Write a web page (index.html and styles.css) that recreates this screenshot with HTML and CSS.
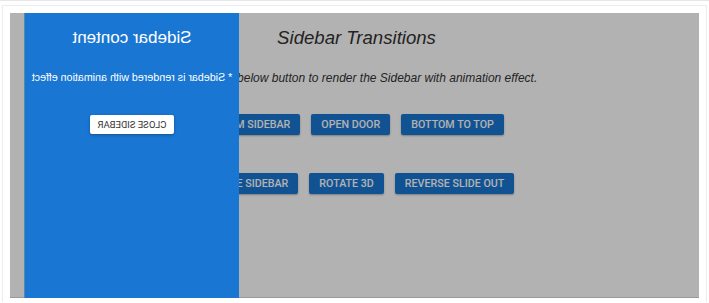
FILE: index.html
```html
<!DOCTYPE html>
<html lang="en">
<head>
<meta charset="utf-8">
<title>Sidebar Transitions</title>
<link rel="stylesheet" href="styles.css">
</head>
<body>
<div class="topline"></div>
<div class="frame">
  <div class="stage">
    <div class="main">
      <h2 class="title">Sidebar Transitions</h2>
      <p class="lead">Click the below button to render the Sidebar with animation effect.</p>
      <div class="btn-row">
        <button class="btn">Zoom Sidebar</button>
        <button class="btn">Open Door</button>
        <button class="btn">Bottom To Top</button>
      </div>
      <div class="btn-row second">
        <button class="btn">Rotate Sidebar</button>
        <button class="btn">Rotate 3D</button>
        <button class="btn">Reverse Slide Out</button>
      </div>
    </div>
    <div class="overlay"></div>
    <aside class="sidebar">
      <div class="sidebar-inner">
        <h3 class="sb-title">Sidebar content</h3>
        <p class="sb-text">* Sidebar is rendered with animation effect</p>
        <button class="close-btn">Close Sidebar</button>
      </div>
    </aside>
  </div>
</div>
</body>
</html>
```
FILE: styles.css
```css
html, body {
  margin: 0;
  padding: 0;
  background: #ffffff;
  overflow: hidden;
}

.topline {
  height: 1px;
  background: #e6e6e6;
}

.frame {
  margin: 4px 0 0 2px;
  width: 689px;
  border: 1px solid #ececec;
  border-bottom: none;
  padding: 7px 7px 4px 7px;
}

.stage {
  position: relative;
  height: 285px;
  background: #ffffff;
  overflow: hidden;
  box-shadow: inset 0 -1px 0 #dcdcdc;
}

.main {
  display: flex;
  flex-direction: column;
  align-items: center;
  padding-left: 4px;
  padding-top: 14px;
  font-family: "Liberation Sans", Arial, sans-serif;
  color: #333;
}

.title {
  margin: 0;
  font-size: 18.6px;
  line-height: 22px;
  font-weight: normal;
  font-style: italic;
}

.lead {
  margin: 21px 0 0 12px;
  font-size: 12px;
  line-height: 16px;
  font-style: italic;
  white-space: nowrap;
}

.btn-row {
  display: flex;
  gap: 11px;
  margin-top: 28px;
  margin-right: 5px;
}

.btn-row.second {
  margin-top: 38px;
}

.btn {
  height: 21px;
  padding: 0 10px;
  border: none;
  border-radius: 2px;
  background: #1976d2;
  color: #ffffff;
  font-family: Roboto, "Liberation Sans", sans-serif;
  font-weight: 500;
  font-size: 10.7px;
  line-height: 21px;
  text-transform: uppercase;
  box-shadow: 0 1px 2px rgba(0, 0, 0, 0.3);
  white-space: nowrap;
}

.overlay {
  position: absolute;
  inset: 0;
  background: rgba(0, 0, 0, 0.3);
}

.sidebar {
  position: absolute;
  top: 0;
  bottom: 0;
  left: 14px;
  width: 215px;
  background: #1976d2;
  border-left: 1px solid #5d84ad;
  box-sizing: border-box;
  overflow: hidden;
}

.sidebar-inner {
  transform: scaleX(-1);
  display: flex;
  flex-direction: column;
  align-items: center;
  padding-top: 15px;
  color: #ffffff;
  font-family: "Liberation Sans", Arial, sans-serif;
}

.sb-title {
  margin: 0;
  font-size: 17px;
  line-height: 20px;
  font-weight: normal;
}

.sb-text {
  margin: 22px 0 0;
  font-size: 10.7px;
  line-height: 14px;
  white-space: nowrap;
}

.close-btn {
  margin-top: 31px;
  height: 19px;
  padding: 0 8px;
  border: none;
  border-radius: 2px;
  background: #ffffff;
  color: #333333;
  font-family: Roboto, "Liberation Sans", sans-serif;
  font-size: 9.5px;
  line-height: 19px;
  text-transform: uppercase;
  box-shadow: 0 1px 3px rgba(0, 0, 0, 0.3);
}
```
